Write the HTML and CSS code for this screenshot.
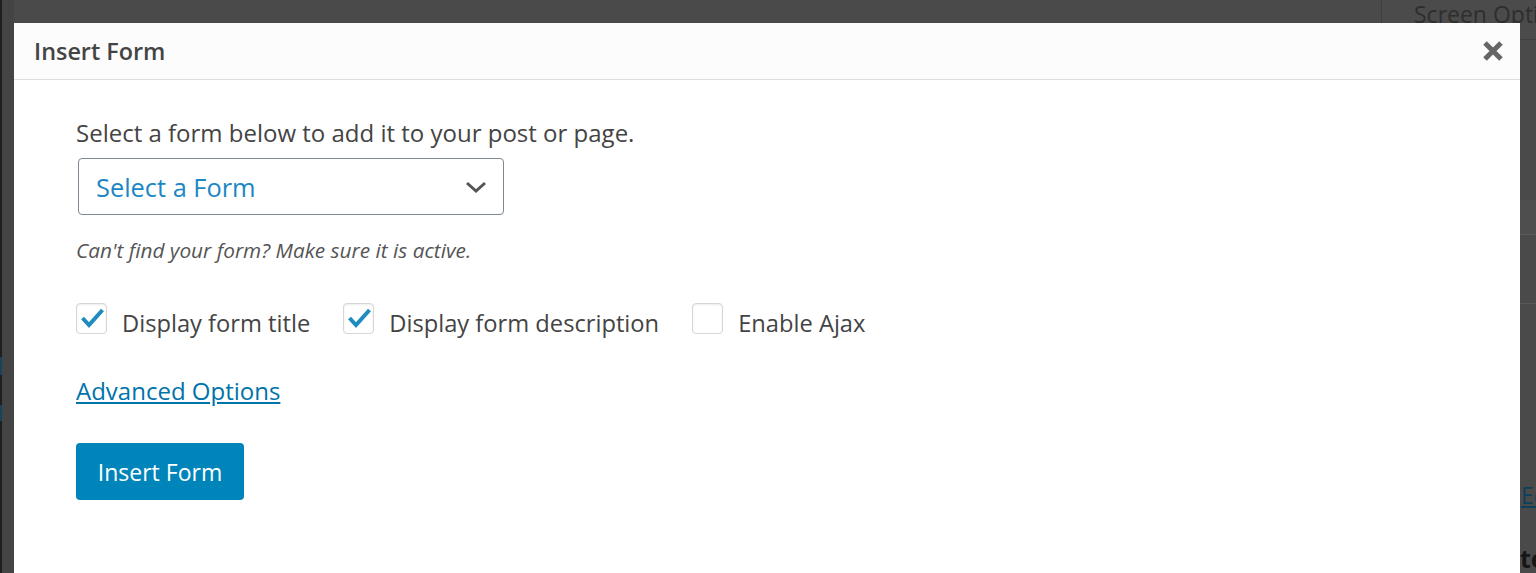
FILE: index.html
```html
<!DOCTYPE html>
<html lang="en">
<head>
<meta charset="utf-8">
<title>Insert Form</title>
<link rel="stylesheet" href="styles.css">
</head>
<body>
<div class="backdrop">
  <div class="admin-menu">
    <span class="menu-mark mark-a"></span>
    <span class="menu-mark mark-b"></span>
  </div>
  <div class="page-content">
    <div class="screen-tab">Screen Options</div>
    <div class="side-panel">
      <div class="side-box side-box-a"></div>
      <div class="side-box side-box-b"></div>
      <div class="side-link">Edit</div>
      <div class="side-strong">te</div>
    </div>
  </div>
</div>

<div class="modal">
  <div class="modal-header">
    <h1 class="modal-title">Insert Form</h1>
    <button class="modal-close" aria-label="Close">
      <svg viewBox="0 0 22 22" width="22" height="22"><path d="M3 3 L19 19 M19 3 L3 19" stroke="#666" stroke-width="5" fill="none"/></svg>
    </button>
  </div>
  <div class="modal-body">
    <label class="intro">Select a form below to add it to your post or page.</label>
    <div class="select">
      <span class="select-value">Select a Form</span>
      <svg class="chevron" viewBox="0 0 22 12" width="22" height="12"><path d="M2 2 L11 10 L20 2" stroke="#555" stroke-width="3" fill="none"/></svg>
    </div>
    <p class="note">Can't find your form? Make sure it is active.</p>
    <div class="options">
      <label class="option">
        <span class="box checked">
          <svg viewBox="0 0 28 24" width="28" height="24"><path d="M4.5 12 L11 19 L24.5 4" stroke="#1e8cbe" stroke-width="4" fill="none"/></svg>
        </span>
        <span class="option-label">Display form title</span>
      </label>
      <label class="option">
        <span class="box checked">
          <svg viewBox="0 0 28 24" width="28" height="24"><path d="M4.5 12 L11 19 L24.5 4" stroke="#1e8cbe" stroke-width="4" fill="none"/></svg>
        </span>
        <span class="option-label">Display form description</span>
      </label>
      <label class="option">
        <span class="box"></span>
        <span class="option-label">Enable Ajax</span>
      </label>
    </div>
    <a class="advanced" href="#">Advanced Options</a>
    <button class="insert">Insert Form</button>
  </div>
</div>
</body>
</html>
```

FILE: styles.css
```css
* { box-sizing: border-box; }

html, body {
  margin: 0;
  height: 100%;
  overflow: hidden;
}

body {
  font-family: "Open Sans", "Noto Sans", sans-serif;
  background: #4a4a4a;
  color: #444;
}

.backdrop {
  display: flex;
  height: 573px;
}

.admin-menu {
  width: 14px;
  flex: none;
  background: #444;
  border-left: 2px solid #1f1f1f;
  position: relative;
}

.menu-mark {
  position: absolute;
  left: -2px;
  width: 2px;
  background: #17435c;
}
.mark-a { top: 357px; height: 18px; }
.mark-b { top: 405px; height: 16px; }

.page-content {
  flex: 1;
  position: relative;
  display: flex;
  justify-content: flex-end;
}

.screen-tab {
  position: absolute;
  right: 0;
  top: 0;
  width: 155px;
  height: 40px;
  border-left: 1px solid #3e3e3e;
  border-bottom: 1px solid #404040;
  background: #4b4b4b;
  color: #2e2e2e;
  font-size: 23px;
  padding: 0 0 0 32px;
  line-height: 28px;
  white-space: nowrap;
  overflow: hidden;
}

.side-panel {
  width: 16px;
  margin-top: 200px;
  display: flex;
  flex-direction: column;
  overflow: hidden;
}

.side-box-a {
  height: 37px;
  background: #4e4e4e;
  border-bottom: 1px solid #5a5a5a;
}
.side-box-b {
  height: 72px;
  background: #4a4a4a;
  border-bottom: 1px solid #585858;
}
.side-link {
  margin-top: 176px;
  margin-left: 1px;
  font-size: 23px;
  color: #0e3f5a;
  text-decoration: underline;
  line-height: 30px;
  white-space: nowrap;
}
.side-strong {
  margin-top: 33px;
  font-size: 25px;
  font-weight: 700;
  color: #161616;
  line-height: 30px;
}

.modal {
  position: absolute;
  left: 14px;
  top: 23px;
  width: 1506px;
  bottom: 0;
  background: #fff;
  display: flex;
  flex-direction: column;
}

.modal-header {
  height: 57px;
  flex: none;
  background: #fcfcfc;
  border-bottom: 1px solid #ddd;
  display: flex;
  align-items: center;
  justify-content: space-between;
  padding: 0 16px 0 20px;
}

.modal-title {
  margin: 0;
  font-size: 23.4px;
  font-weight: 600;
  color: #444;
  line-height: 32px;
}

.modal-close {
  border: 0;
  background: none;
  padding: 0;
  width: 22px;
  height: 22px;
  display: flex;
}

.modal-body {
  padding: 37px 62px 0;
  display: flex;
  flex-direction: column;
  align-items: flex-start;
}

.intro {
  font-size: 24px;
  line-height: 32px;
  color: #444;
}

.select {
  margin-top: 9px;
  width: 426px;
  height: 57px;
  border: 1px solid #7e8993;
  border-radius: 4px;
  display: flex;
  align-items: center;
  justify-content: space-between;
  padding: 0 16px 0 17px;
  margin-left: 2px;
}

.select-value {
  font-size: 25.4px;
  color: #1c87c4;
  line-height: 32px;
}

.note {
  margin: 21px 0 0;
  font-size: 20.8px;
  line-height: 28px;
  font-style: italic;
  color: #555;
}

.options {
  margin-top: 39px;
  display: flex;
  gap: 33px;
}

.option {
  display: flex;
  align-items: flex-start;
  gap: 15px;
}

.box {
  width: 31px;
  height: 31px;
  border: 1px solid #d6d6d6;
  border-radius: 4px;
  background: #fff;
  box-shadow: inset 0 1px 2px rgba(0,0,0,0.08);
  display: flex;
  align-items: center;
  justify-content: center;
}

.box svg {
  flex: none;
  margin-top: -2px;
}

.option-label {
  margin-top: 5px;
  font-size: 23.7px;
  line-height: 30px;
  color: #444;
}

.advanced {
  margin-top: 37px;
  font-size: 24px;
  line-height: 32px;
  color: #0073aa;
  text-decoration: underline;
}

.insert {
  margin-top: 36px;
  height: 57px;
  width: 168px;
  border: 0;
  border-radius: 4px;
  background: #0085ba;
  color: #fff;
  font-family: inherit;
  font-size: 23px;
  padding: 0;
}
```
